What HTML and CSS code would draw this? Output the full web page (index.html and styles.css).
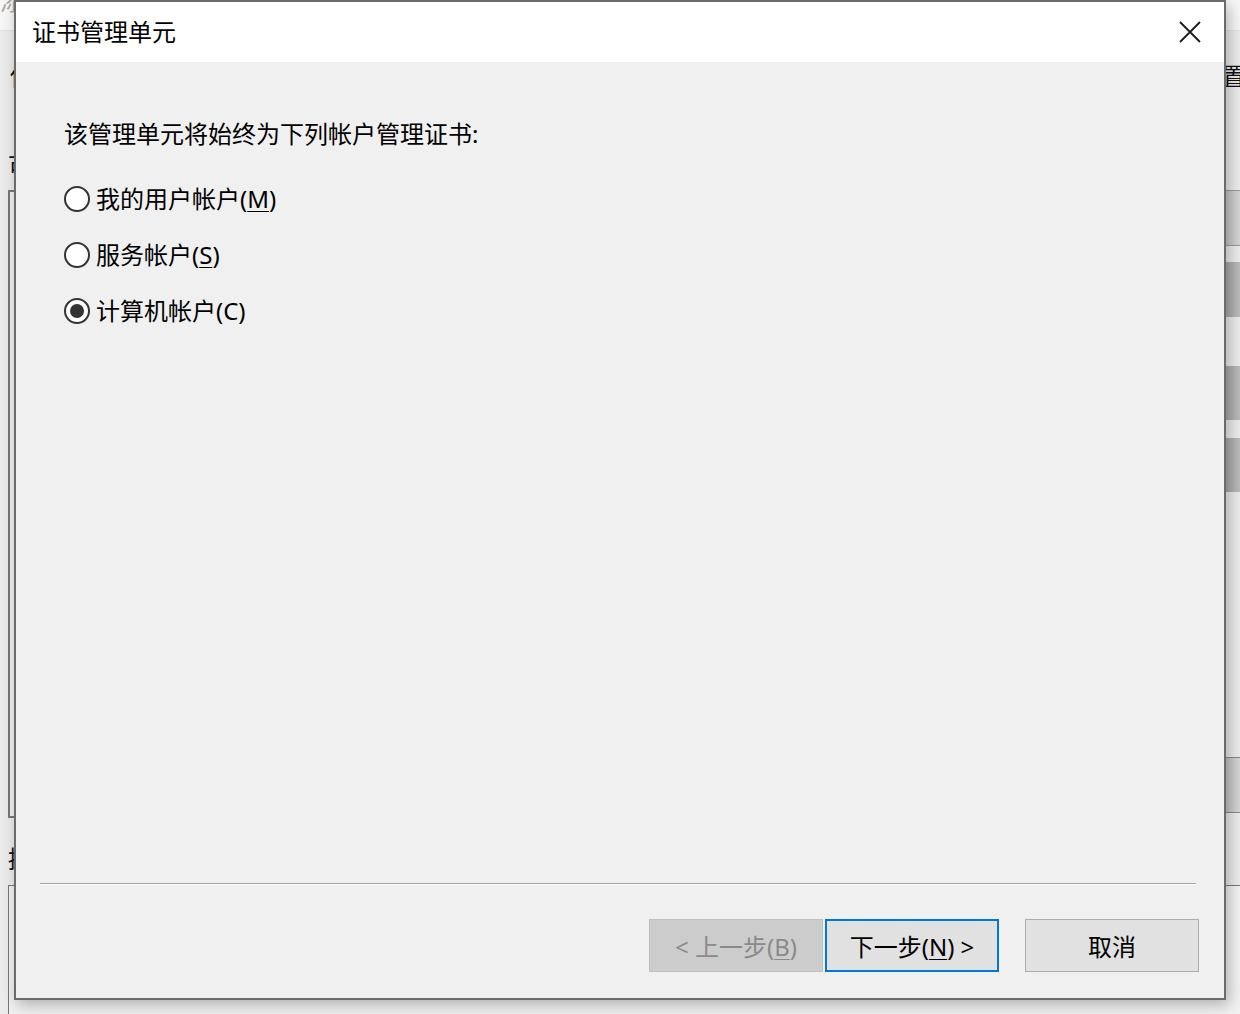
FILE: index.html
```html
<!DOCTYPE html>
<html lang="zh-CN">
<head>
<meta charset="utf-8">
<title>证书管理单元</title>
<link rel="stylesheet" href="styles.css">
</head>
<body>
<div class="bgwin">
  <div class="bg-top"><span class="bg-title">添</span></div>
  <div class="bg-text bg-t1">你</div>
  <div class="bg-text bg-t2">可</div>
  <div class="bg-box bg-box1"></div>
  <div class="bg-text bg-t3">描</div>
  <div class="bg-box bg-box2"></div>
  <div class="bg-text bg-t4">置</div>
  <div class="bg-band band-a"></div>
  <div class="bg-band band-b dark"></div>
  <div class="bg-band band-c dark"></div>
  <div class="bg-band band-d dark"></div>
  <div class="bg-band band-e"></div>
</div>

<div class="dialog">
  <div class="titlebar">
    <span class="title">证书管理单元</span>
    <button class="close" aria-label="关闭">
      <svg width="22" height="22" viewBox="0 0 22 22"><path d="M1 1 L21 21 M21 1 L1 21" stroke="#1a1a1a" stroke-width="1.8" fill="none"/></svg>
    </button>
  </div>
  <div class="body">
    <div class="main">
      <p class="prompt">该管理单元将始终为下列帐户管理证书:</p>
      <div class="options">
        <label class="opt"><span class="radio"></span><span>我的用户帐户(<u>M</u>)</span></label>
        <label class="opt"><span class="radio"></span><span>服务帐户(<u>S</u>)</span></label>
        <label class="opt"><span class="radio checked"></span><span>计算机帐户(C)</span></label>
      </div>
    </div>
    <div class="footer">
      <div class="sep"></div>
      <div class="buttons">
        <button class="btn disabled">&lt; 上一步(<u>B</u>)</button>
        <button class="btn primary">下一步(<u>N</u>) &gt;</button>
        <button class="btn cancel">取消</button>
      </div>
    </div>
  </div>
</div>
</body>
</html>
```
FILE: styles.css
```css
html, body {
  margin: 0;
  padding: 0;
  width: 1240px;
  height: 1014px;
  overflow: hidden;
  background: #ebebeb;
  font-family: "Noto Sans", "Noto Sans CJK SC", sans-serif;
}

/* background window (partially hidden behind the dialog) */
.bgwin {
  position: absolute;
  inset: 0;
  background: #ececec;
  overflow: hidden;
}
.bg-top {
  position: absolute;
  left: 0; top: 0; right: 0;
  height: 30px;
  background: #f7f7f7;
  border-bottom: 1px solid #e2e2e2;
  overflow: hidden;
}
.bg-title {
  position: absolute;
  left: 0; top: -12px;
  font-size: 24px;
  line-height: 24px;
  color: #a8a8a8;
  font-family: "Noto Sans CJK SC", sans-serif;
}
.bg-text {
  position: absolute;
  font-size: 24px;
  line-height: 24px;
  color: #111;
  font-family: "Noto Sans CJK SC", sans-serif;
}
.bg-t1 { left: 10px; top: 63px; }
.bg-t2 { left: 8px; top: 153px; }
.bg-t3 { left: 8px; top: 846px; }
.bg-t4 { left: 1222px; top: 63px; }
.bg-box {
  position: absolute;
  left: 8px;
  right: -20px;
  background: #f2f2f2;
  border: 2px solid #777;
}
.bg-box1 { top: 190px; height: 624px; right: 40px; }
.bg-box2 { top: 885px; bottom: -10px; border-width: 1px; }
.bg-band {
  position: absolute;
  left: 1226px;
  width: 14px;
  background: linear-gradient(to right, #d0d0d0, #e2e2e2);
}
.bg-band.dark { background: linear-gradient(to right, #a8a8a8, #bcbcbc); }
.band-a { top: 190px; height: 54px; border-top: 1px solid #9a9a9a; border-bottom: 1px solid #9a9a9a; background: linear-gradient(to right, #c4c4c4, #d6d6d6); }
.band-b { top: 262px; height: 55px; }
.band-c { top: 366px; height: 54px; }
.band-d { top: 438px; height: 54px; }
.band-e { top: 757px; height: 54px; border-top: 1px solid #8a8a8a; border-bottom: 1px solid #8a8a8a; background: linear-gradient(to right, #c4c4c4, #d6d6d6); }

/* dialog window */
.dialog {
  position: absolute;
  left: 14px;
  top: 0;
  width: 1212px;
  height: 1000px;
  box-sizing: border-box;
  border: 2px solid #6b6b6b;
  background: #f0f0f0;
  display: flex;
  flex-direction: column;
  box-shadow: 3px 5px 14px rgba(0, 0, 0, 0.28);
}
.titlebar {
  height: 60px;
  flex: none;
  background: #ffffff;
  display: flex;
  align-items: center;
  justify-content: space-between;
  padding-left: 16px;
}
.title {
  font-size: 24px;
  line-height: 32px;
  margin-top: -2px;
  color: #000;
  font-family: "Noto Sans CJK SC", sans-serif;
}
.close {
  width: 68px;
  height: 60px;
  border: none;
  background: transparent;
  padding: 0;
  display: flex;
  align-items: center;
  justify-content: center;
}
.body {
  flex: 1;
  display: flex;
  flex-direction: column;
}
.main {
  flex: 1;
  padding: 56px 0 0 48px;
}
.prompt {
  margin: 0;
  font-size: 24px;
  line-height: 32px;
  color: #000;
}
.options {
  margin-top: 33px;
  display: flex;
  flex-direction: column;
  gap: 24px;
}
.opt {
  display: flex;
  align-items: center;
  gap: 6px;
  font-size: 24px;
  line-height: 32px;
  color: #000;
}
.opt u { text-underline-offset: 3px; text-decoration-thickness: 1px; }
.radio {
  width: 26px;
  height: 26px;
  box-sizing: border-box;
  border: 2px solid #333;
  border-radius: 50%;
  background: #fff;
  display: flex;
  align-items: center;
  justify-content: center;
}
.radio.checked::after {
  content: "";
  width: 14px;
  height: 14px;
  border-radius: 50%;
  background: #333;
}
.footer {
  flex: none;
  padding: 0 25px 26px 24px;
}
.sep {
  height: 1px;
  background: #a0a0a0;
  border-bottom: 1px solid #ffffff;
  margin-right: 3px;
  margin-bottom: 34px;
}
.buttons {
  display: flex;
  justify-content: flex-end;
}
.btn {
  width: 174px;
  height: 53px;
  box-sizing: border-box;
  font-family: "Noto Sans", "Noto Sans CJK SC", sans-serif;
  font-size: 24px;
  color: #000;
  background: #e1e1e1;
  border: 1px solid #adadad;
  padding: 0;
}
.btn u { text-underline-offset: 3px; text-decoration-thickness: 1px; }
.btn.disabled {
  background: #cccccc;
  border-color: #bfbfbf;
  color: #8a8a8a;
}
.btn.primary {
  margin-left: 2px;
  border: 2px solid #0078d7;
}
.btn.cancel {
  margin-left: 26px;
}
```
